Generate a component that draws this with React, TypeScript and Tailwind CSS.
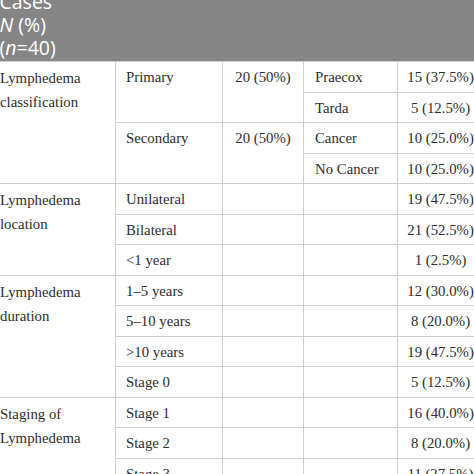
import React from "react";

const serif = { fontFamily: '"Liberation Serif", "Times New Roman", serif' };

type Row = {
  c1?: { text: React.ReactNode; span: number };
  c2?: { text: string; span: number };
  c3?: { text: string; span: number };
  c4: string;
  c5: string;
};

const rows: Row[] = [
  { c1: { text: <>Lymphedema<br />classification</>, span: 4 }, c2: { text: "Primary", span: 2 }, c3: { text: "20 (50%)", span: 2 }, c4: "Praecox", c5: "15 (37.5%)" },
  { c4: "Tarda", c5: "5 (12.5%)" },
  { c2: { text: "Secondary", span: 2 }, c3: { text: "20 (50%)", span: 2 }, c4: "Cancer", c5: "10 (25.0%)" },
  { c4: "No Cancer", c5: "10 (25.0%)" },
  { c1: { text: <>Lymphedema<br />location</>, span: 3 }, c2: { text: "Unilateral", span: 1 }, c3: { text: "", span: 1 }, c4: "", c5: "19 (47.5%)" },
  { c2: { text: "Bilateral", span: 1 }, c3: { text: "", span: 1 }, c4: "", c5: "21 (52.5%)" },
  { c2: { text: "<1 year", span: 1 }, c3: { text: "", span: 1 }, c4: "", c5: "1 (2.5%)" },
  { c1: { text: <>Lymphedema<br />duration</>, span: 4 }, c2: { text: "1–5 years", span: 1 }, c3: { text: "", span: 1 }, c4: "", c5: "12 (30.0%)" },
  { c2: { text: "5–10 years", span: 1 }, c3: { text: "", span: 1 }, c4: "", c5: "8 (20.0%)" },
  { c2: { text: ">10 years", span: 1 }, c3: { text: "", span: 1 }, c4: "", c5: "19 (47.5%)" },
  { c2: { text: "Stage 0", span: 1 }, c3: { text: "", span: 1 }, c4: "", c5: "5 (12.5%)" },
  { c1: { text: <>Staging of<br />Lymphedema</>, span: 3 }, c2: { text: "Stage 1", span: 1 }, c3: { text: "", span: 1 }, c4: "", c5: "16 (40.0%)" },
  { c2: { text: "Stage 2", span: 1 }, c3: { text: "", span: 1 }, c4: "", c5: "8 (20.0%)" },
  { c2: { text: "Stage 3", span: 1 }, c3: { text: "", span: 1 }, c4: "", c5: "11 (27.5%)" },
];

const td = "border border-[#cfcfcf] align-top pt-[3px] pb-0 leading-[24px]";

export default function App() {
  return (
    <div className="w-[474px] h-[474px] overflow-hidden bg-white relative">
      <table
        className="border-collapse table-fixed w-[494px] -ml-[11px] -mt-[10px] text-[14.8px] text-[#2e2e2e]"
        style={serif}
      >
        <colgroup>
          <col className="w-[126px]" />
          <col className="w-[107px]" />
          <col className="w-[81px]" />
          <col className="w-[94px]" />
          <col className="w-[86px]" />
        </colgroup>
        <thead>
          <tr>
            <th
              colSpan={5}
              className="bg-[#858585] text-white text-left font-normal pl-[10px] pb-[2px] pt-0 text-[19.5px] leading-[23px] border-b border-[#cfcfcf]"
              style={{ fontFamily: '"Open Sans", "Noto Sans", sans-serif' }}
            >
              <div>Cases</div>
              <div>
                <i>N</i> (%)
              </div>
              <div>
                (<i>n</i>=40)
              </div>
            </th>
          </tr>
        </thead>
        <tbody>
          {rows.map((r, i) => (
            <tr key={i} className="h-[30.5px]">
              {r.c1 && (
                <td rowSpan={r.c1.span} className={`${td} pl-[10px] pt-[4px]`}>
                  {r.c1.text}
                </td>
              )}
              {r.c2 && (
                <td rowSpan={r.c2.span} className={`${td} pl-[10px]`}>
                  {r.c2.text}
                </td>
              )}
              {r.c3 && (
                <td rowSpan={r.c3.span} className={`${td} text-center`}>
                  {r.c3.text}
                </td>
              )}
              <td className={`${td} pl-[11px]`}>{r.c4}</td>
              <td className={`${td} text-center`}>{r.c5}</td>
            </tr>
          ))}
        </tbody>
      </table>
    </div>
  );
}
